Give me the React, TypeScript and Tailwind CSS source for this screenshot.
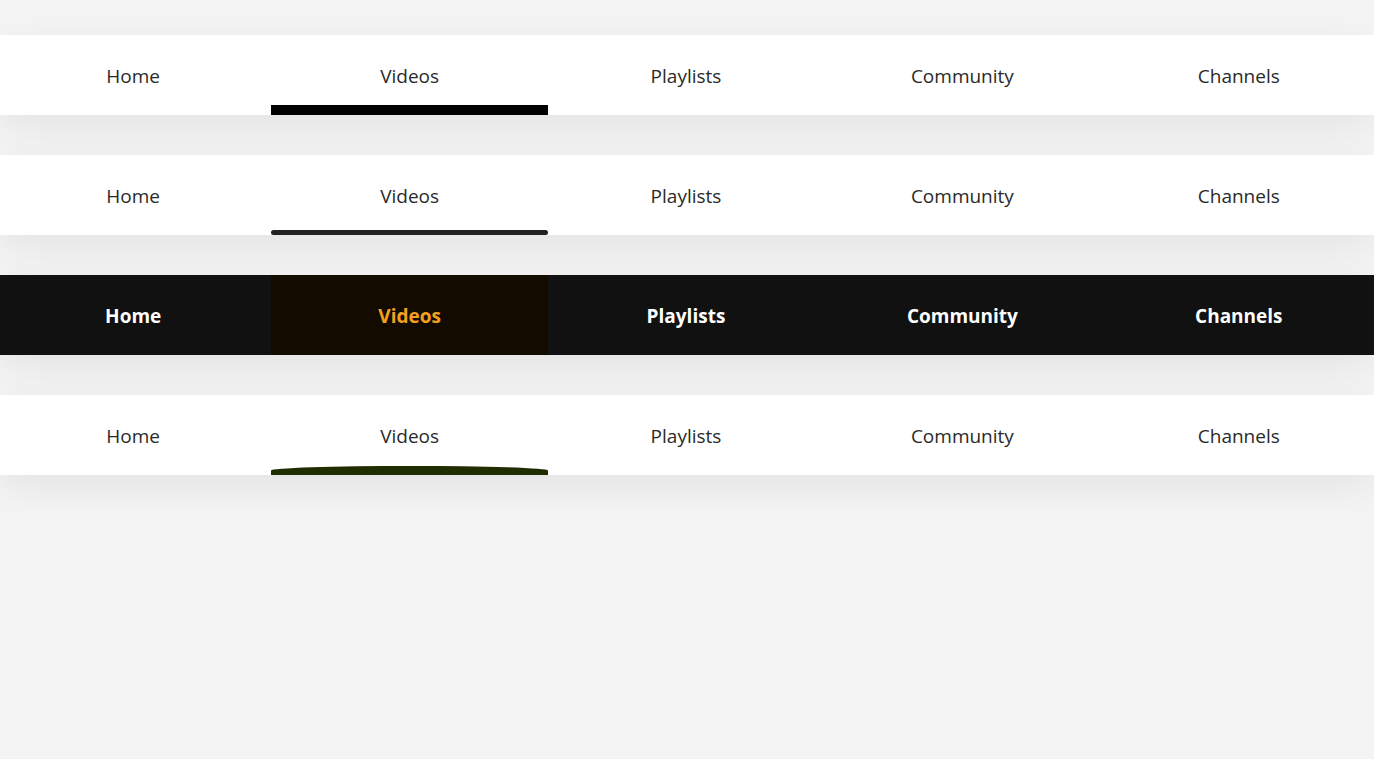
const tabs = ['Home', 'Videos', 'Playlists', 'Community', 'Channels'];

type Variant = 'block' | 'line' | 'dark' | 'pill';

function TabBar({ variant }: { variant: Variant }) {
  const dark = variant === 'dark';
  return (
    <nav
      className={`h-20 shadow-[0_12px_40px_rgba(0,0,0,0.07)] ${dark ? 'bg-[#111111]' : 'bg-white'}`}
    >
      <ul className="ml-[-5px] grid h-full w-[1382px] grid-cols-5">
        {tabs.map((tab) => {
          const active = tab === 'Videos';
          return (
            <li
              key={tab}
              className={`relative flex items-center justify-center pt-[2px] ${
                dark && active ? 'bg-[#130b00]' : ''
              }`}
            >
              <span
                className={
                  dark
                    ? `text-[19px] font-bold ${active ? 'text-[#f5a01c]' : 'text-white'}`
                    : 'text-[19px] text-[#2a2a2a]'
                }
              >
                {tab}
              </span>
              {active && variant === 'block' && (
                <span className="absolute bottom-0 left-0 right-0 h-[10px] bg-black" />
              )}
              {active && variant === 'line' && (
                <span className="absolute bottom-0 left-0 right-0 h-[5px] rounded-[3px] bg-[#222222]" />
              )}
              {active && variant === 'pill' && (
                <span className="absolute bottom-0 left-0 right-0 h-[9px] rounded-t-[50%] bg-[#1f2d00]" />
              )}
            </li>
          );
        })}
      </ul>
    </nav>
  );
}

export default function App() {
  return (
    <div
      className="min-h-screen overflow-hidden bg-[#f4f4f4] pt-[35px]"
      style={{ fontFamily: '"Open Sans", "Noto Sans", sans-serif' }}
    >
      <div className="flex flex-col gap-10">
        <TabBar variant="block" />
        <TabBar variant="line" />
        <TabBar variant="dark" />
        <TabBar variant="pill" />
      </div>
    </div>
  );
}
